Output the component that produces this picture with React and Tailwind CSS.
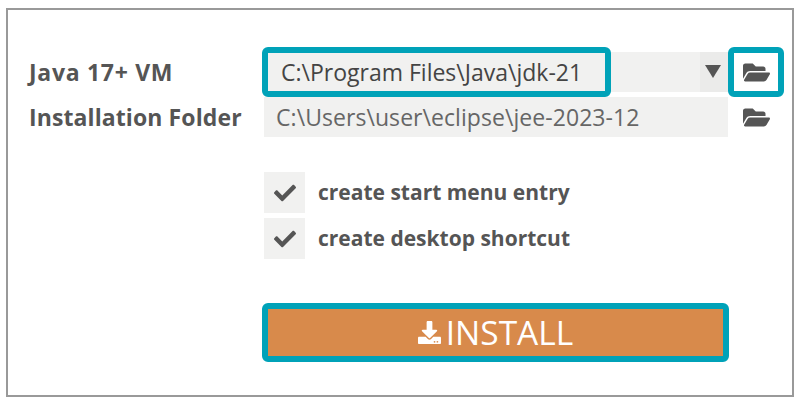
import { FaFolderOpen, FaCheck, FaDownload } from "react-icons/fa";

const Check = ({ label }) => (
  <div className="flex items-center h-[41px]">
    <span className="w-[41px] h-[41px] bg-[#f1f1f0] flex items-center justify-center text-[#555]">
      <FaCheck className="text-[22px]" />
    </span>
    <span className="ml-[13px] pt-[1px] text-[21px] font-bold text-[#555]">{label}</span>
  </div>
);

const App = () => {
  return (
    <div className="w-[800px] h-[407px] bg-white pt-[8px] pl-[6px] font-['Open_Sans',sans-serif]">
      <div className="w-[788px] h-[389px] border-2 border-[#999] pt-[42px] pl-[21px] relative">
        <div className="flex items-center h-[40px]">
          <label className="w-[235px] text-[23px] tracking-[0.7px] font-bold text-[#555]">Java 17+ VM</label>
          <div className="relative w-[464px] h-[40px] bg-[#f1f1f0] flex items-center">
            <span className="ml-[17px] text-[23px] text-[#444]">C:\Program Files\Java\jdk-21</span>
            <span className="absolute right-0 top-0 h-[40px] w-[28px] bg-[#ebebea] flex items-start justify-center pt-[13px] pr-[2px]">
              <svg width="16" height="13" viewBox="0 0 16 13"><polygon points="0,0 16,0 8,13" fill="#555" /></svg>
            </span>
            <span className="absolute left-[-2px] top-[-5px] w-[349px] h-[50px] border-[6px] border-[#00a2b8] rounded-[6px]"></span>
          </div>
          <span className="relative w-[56px] h-[40px] flex items-center justify-center text-[#555]">
            <FaFolderOpen className="text-[27px]" />
            <span className="absolute left-0 top-[-5px] w-[56px] h-[50px] border-[6px] border-[#00a2b8] rounded-[6px]"></span>
          </span>
        </div>
        <div className="flex items-center h-[40px] mt-[5px]">
          <label className="w-[235px] text-[23px] tracking-[0.1px] font-bold text-[#555]">Installation Folder</label>
          <div className="w-[464px] h-[40px] bg-[#f1f1f0] flex items-center">
            <span className="ml-[12px] text-[23px] tracking-[0.06px] text-[#666]">C:\Users\user\eclipse\jee-2023-12</span>
          </div>
          <span className="w-[56px] h-[40px] flex items-center justify-center text-[#555]">
            <FaFolderOpen className="text-[27px]" />
          </span>
        </div>
        <div className="ml-[235px] mt-[35px] flex flex-col gap-[5px]">
          <Check label="create start menu entry" />
          <Check label="create desktop shortcut" />
        </div>
        <div className="ml-[233px] mt-[44px] w-[467px] h-[59px] border-[6px] border-[#00a2b8] rounded-[6px] bg-[#d88a4b] text-white flex items-center justify-center gap-[5px]">
          <FaDownload className="text-[23px]" />
          <span className="text-[33.5px] leading-none">INSTALL</span>
        </div>
      </div>
    </div>
  );
};

export default App;
